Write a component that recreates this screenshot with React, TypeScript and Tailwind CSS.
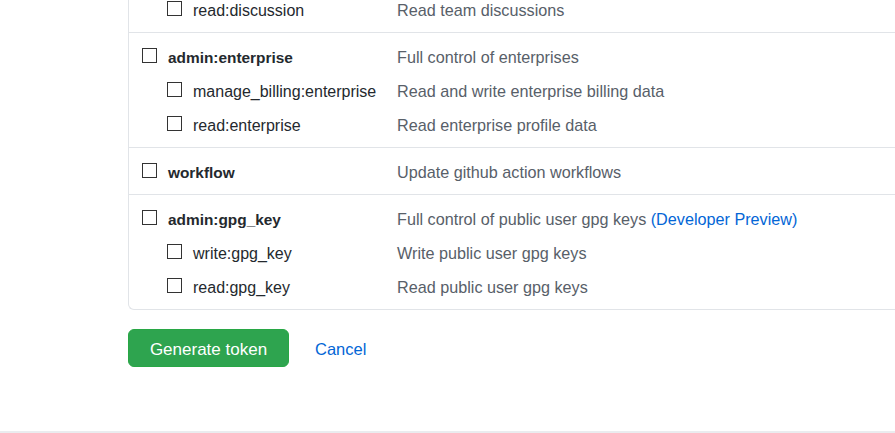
import React from 'react'

type Scope = { name: string; desc: string; preview?: boolean }
type Group = { top?: Scope; subs: Scope[] }

const groups: Group[] = [
  { subs: [{ name: 'read:discussion', desc: 'Read team discussions' }] },
  {
    top: { name: 'admin:enterprise', desc: 'Full control of enterprises' },
    subs: [
      { name: 'manage_billing:enterprise', desc: 'Read and write enterprise billing data' },
      { name: 'read:enterprise', desc: 'Read enterprise profile data' },
    ],
  },
  { top: { name: 'workflow', desc: 'Update github action workflows' }, subs: [] },
  {
    top: { name: 'admin:gpg_key', desc: 'Full control of public user gpg keys', preview: true },
    subs: [
      { name: 'write:gpg_key', desc: 'Write public user gpg keys' },
      { name: 'read:gpg_key', desc: 'Read public user gpg keys' },
    ],
  },
]

function Box() {
  return <span className="mb-[3px] h-[15px] w-[15px] shrink-0 border border-[#333] bg-white" />
}

function Row({ scope, sub }: { scope: Scope; sub?: boolean }) {
  return (
    <div className="flex h-[34px] items-center">
      <div className={`flex w-[255px] shrink-0 items-center ${sub ? 'pl-[38px]' : 'pl-[13px]'}`}>
        <Box />
        <span className={`ml-[11px] pt-[1px] text-[#24292e] ${sub ? 'text-[16px]' : 'text-[15.4px] font-semibold'}`}>{scope.name}</span>
      </div>
      <span className="ml-[13px] pt-[1px] text-[#586069]">
        {scope.desc}
        {scope.preview && <a className="text-[#0366d6]"> (Developer Preview)</a>}
      </span>
    </div>
  )
}

export default function App() {
  return (
    <div className="relative h-[433px] w-[895px] overflow-hidden bg-white text-[16.2px] [font-family:'Segoe_UI','Liberation_Sans',sans-serif]">
      <div className="-mt-[7px] ml-[128px] -mr-[10px] rounded-bl-md border-b border-l border-[#e1e4e8]">
        {groups.map((g, i) => (
          <div key={i} className={`pb-[5px] ${i > 0 ? 'border-t border-[#e1e4e8] pt-[7px]' : ''}`}>
            {g.top && <Row scope={g.top} />}
            {g.subs.map((s) => <Row key={s.name} scope={s} sub />)}
          </div>
        ))}
      </div>
      <div className="ml-[128px] mt-[19px] flex items-center">
        <button className="h-[38px] w-[161px] rounded-md border border-[#28a745] bg-[#2ea44f] pt-[3px] text-[17px] text-white">Generate token</button>
        <a className="ml-[26px] pt-[3px] text-[16.5px] text-[#0366d6]">Cancel</a>
      </div>
      <div className="absolute bottom-0 left-0 h-[2px] w-full bg-[#eaecef]" />
    </div>
  )
}
